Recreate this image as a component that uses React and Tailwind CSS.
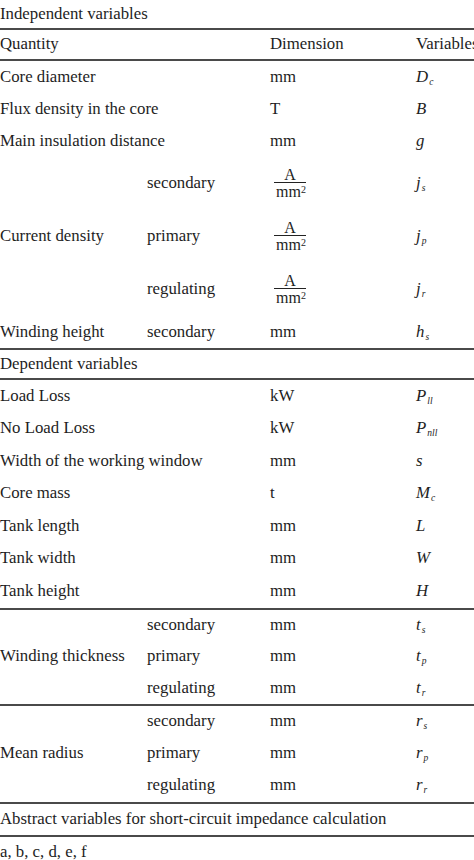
import React from 'react';

const Rule = () => <div className="h-[2px] bg-[#4a4a4a]" />;

const Var = ({ base, sub }) => (
  <span className="italic">
    {base}
    {sub && <sub className="text-[9.5px] relative top-[3px] align-baseline ml-[1px]">{sub}</sub>}
  </span>
);

const Frac = () => (
  <span className="inline-flex flex-col items-center w-[32px] ml-[4px] leading-none">
    <span className="text-[16px] leading-[15px] border-b border-[#222] w-full text-center">A</span>
    <span className="text-[16px] leading-[17px] pl-[2px]">
      mm<sup className="text-[10px] relative -top-[4px] align-baseline">2</sup>
    </span>
  </span>
);

const Row = ({ h, a, b, c, d }) => (
  <div className="flex items-center" style={{ height: h }}>
    <div className="w-[147px] shrink-0 whitespace-nowrap">{a}</div>
    <div className="w-[123px] shrink-0 whitespace-nowrap">{b}</div>
    <div className="w-[146px] shrink-0 whitespace-nowrap">{c}</div>
    <div className="whitespace-nowrap">{d}</div>
  </div>
);

const Group = ({ label, rows, h }) => (
  <div className="flex">
    <div className="w-[147px] shrink-0 flex items-center whitespace-nowrap">{label}</div>
    <div className="flex-1">
      {rows.map((r, i) => (
        <div key={i} className="flex items-center" style={{ height: h[i] }}>
          <div className="w-[123px] shrink-0 whitespace-nowrap">{r[0]}</div>
          <div className="w-[146px] shrink-0 whitespace-nowrap">{r[1]}</div>
          <div className="whitespace-nowrap">{r[2]}</div>
        </div>
      ))}
    </div>
  </div>
);

const Full = ({ h, children }) => (
  <div className="flex items-center whitespace-nowrap" style={{ height: h }}>{children}</div>
);

export default function App() {
  return (
    <div
      className="w-[474px] h-[860px] overflow-hidden bg-white text-[#1e1e1e] text-[16.8px] leading-none"
      style={{ fontFamily: '"Liberation Serif", "Times New Roman", serif' }}
    >
      <Full h={28}>Independent variables</Full>
      <Rule />
      <Row h={29} a="Quantity" b="" c="Dimension" d="Variables" />
      <Rule />
      <Row h={32} a="Core diameter" c="mm" d={<Var base="D" sub="c" />} />
      <Row h={32} a="Flux density in the core" c="T" d={<Var base="B" />} />
      <Row h={32} a="Main insulation distance" c="mm" d={<Var base="g" />} />
      <Group
        label="Current density"
        h={[53, 53, 53]}
        rows={[
          ['secondary', <Frac />, <Var base="j" sub="s" />],
          ['primary', <Frac />, <Var base="j" sub="p" />],
          ['regulating', <Frac />, <Var base="j" sub="r" />],
        ]}
      />
      <Row h={32} a="Winding height" b="secondary" c="mm" d={<Var base="h" sub="s" />} />
      <Rule />
      <Full h={28}>Dependent variables</Full>
      <Rule />
      <Row h={32.5} a="Load Loss" c="kW" d={<Var base="P" sub="ll" />} />
      <Row h={32.5} a="No Load Loss" c="kW" d={<Var base="P" sub="nll" />} />
      <Row h={32.5} a="Width of the working window" c="mm" d={<Var base="s" />} />
      <Row h={32.5} a="Core mass" c="t" d={<Var base="M" sub="c" />} />
      <Row h={32.5} a="Tank length" c="mm" d={<Var base="L" />} />
      <Row h={32.5} a="Tank width" c="mm" d={<Var base="W" />} />
      <Row h={32.5} a="Tank height" c="mm" d={<Var base="H" />} />
      <Rule />
      <Group
        label="Winding thickness"
        h={[31, 32, 31]}
        rows={[
          ['secondary', 'mm', <Var base="t" sub="s" />],
          ['primary', 'mm', <Var base="t" sub="p" />],
          ['regulating', 'mm', <Var base="t" sub="r" />],
        ]}
      />
      <Rule />
      <Group
        label="Mean radius"
        h={[32, 32, 32]}
        rows={[
          ['secondary', 'mm', <Var base="r" sub="s" />],
          ['primary', 'mm', <Var base="r" sub="p" />],
          ['regulating', 'mm', <Var base="r" sub="r" />],
        ]}
      />
      <Rule />
      <Full h={31}>Abstract variables for short-circuit impedance calculation</Full>
      <Rule />
      <Full h={32}>a, b, c, d, e, f</Full>
    </div>
  );
}
